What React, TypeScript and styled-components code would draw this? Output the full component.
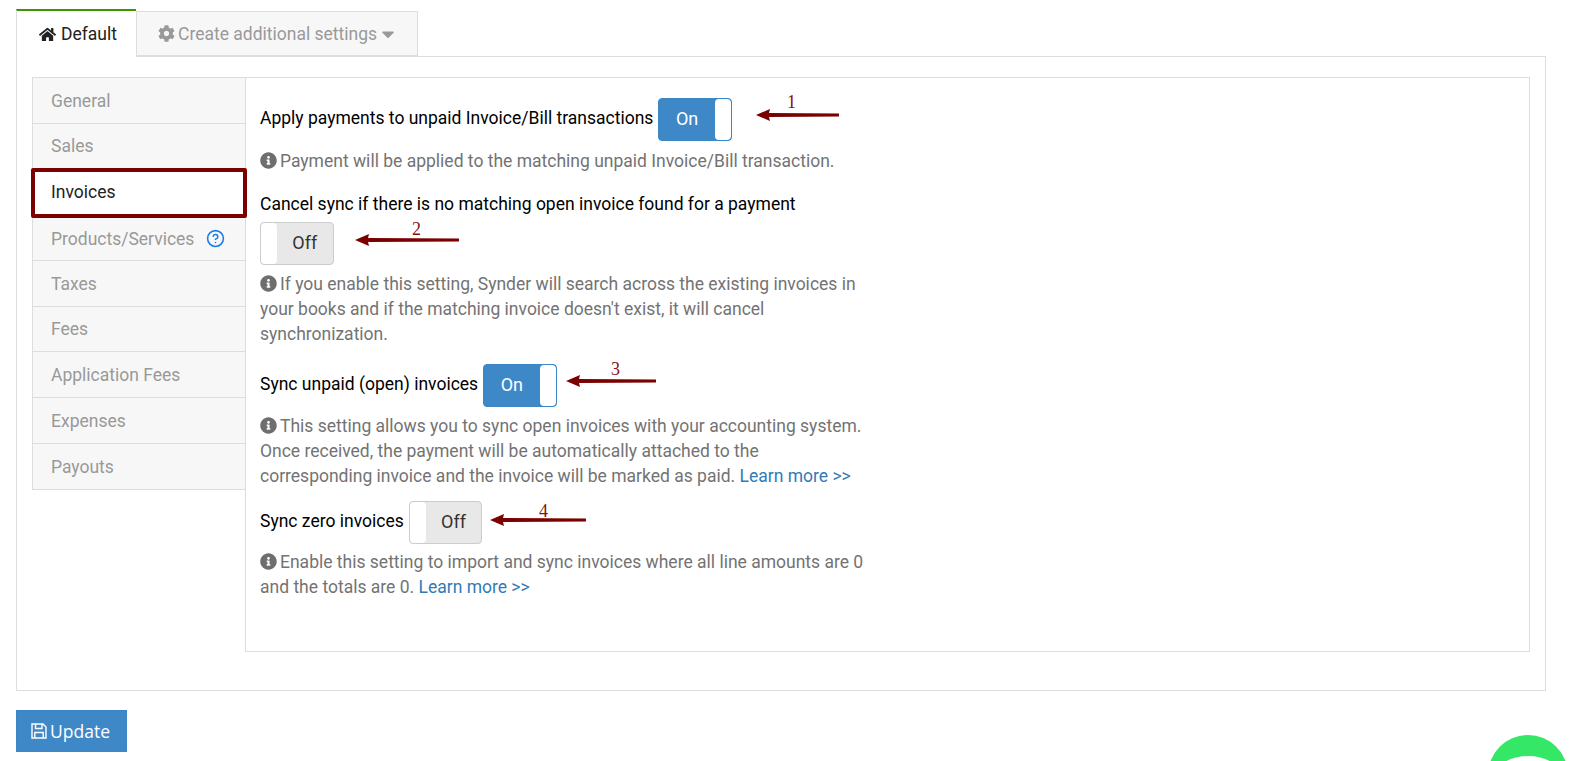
import styled, { createGlobalStyle } from 'styled-components';
import { FaHome, FaCog, FaCaretDown, FaInfoCircle } from 'react-icons/fa';
import { CircleHelp } from 'lucide-react';

const Global = createGlobalStyle`
    html, body {
        margin: 0;
        height: 761px;
        overflow: hidden;
        background: #fff;
        font-family: Roboto, "Liberation Sans", sans-serif;
        font-size: 17.5px;
        color: #000;
    }
    * { box-sizing: border-box; }
`

const Page = styled.div`
    position: relative;
    width: 1576px;
    height: 761px;
    overflow: hidden;
    padding: 9px 30px 0 16px;
`

const Tabs = styled.div`
    display: flex;
    align-items: flex-end;
    height: 47px;
    position: relative;
    z-index: 1;
`

const ActiveTab = styled.div`
    width: 120px;
    height: 48px;
    margin-bottom: -1px;
    border-top: 2px solid #3f9300;
    border-left: 1px solid #ddd;
    background: #fff;
    display: flex;
    align-items: center;
    padding-left: 22px;
    gap: 5px;
    color: #222;
    svg { font-size: 17px; }
`

const DisabledTab = styled.div`
    width: 282px;
    height: 46px;
    margin-bottom: -1px;
    border: 1px solid #ddd;
    border-bottom-width: 2px;
    background: #f7f7f7;
    color: #999;
    display: flex;
    align-items: center;
    padding-left: 21px;
    gap: 3px;
    svg { font-size: 17px; }
    svg:last-child { font-size: 20px; margin-left: -2px; }
`

const Panel = styled.div`
    height: 635px;
    border: 1px solid #ddd;
    padding: 20px 15px 0;
    display: flex;
    align-items: flex-start;
`

const Side = styled.div`
    width: 213px;
    border: 1px solid #ddd;
    border-right: none;
    background: #f7f7f7;
`

const SideItem = styled.div<{ $h: number }>`
    height: ${p => p.$h}px;
    display: flex;
    align-items: center;
    padding-left: 18px;
    color: #999;
    border-bottom: 1px solid #ddd;
    &:last-child { border-bottom: none; }
`

const SideActive = styled.div`
    height: 50px;
    margin: -1px 0 -1px -2px;
    width: 216px;
    position: relative;
    display: flex;
    align-items: center;
    padding: 0 0 3px 16px;
    background: #fff;
    color: #222;
    border: 4px solid #7b0000;
    border-radius: 2px;
`

const Help = styled.span`
    color: #1a7fe8;
    margin-left: 12px;
    display: flex;
`

const Content = styled.div`
    width: 1287px;
    height: 575px;
    border: 1px solid #ddd;
    padding: 20px 15px 0 14px;
`

const Setting = styled.div<{ $mb: number }>`
    margin-bottom: ${p => p.$mb}px;
`

const Label = styled.div`
    display: flex;
    align-items: center;
    gap: 5px;
    height: 43px;
`

const LabelText = styled.span`
    margin-bottom: 3px;
`

const TextLabel = styled.div`
    height: 26px;
    margin-bottom: 5px;
    line-height: 26px;
`

const Toggle = styled.div<{ $on: boolean }>`
    width: 73.5px;
    height: 43px;
    border-radius: 4px;
    display: flex;
    flex-direction: ${p => (p.$on ? 'row' : 'row-reverse')};
    overflow: hidden;
    border: 1px solid ${p => (p.$on ? '#3d86c6' : '#ccc')};
    background: ${p => (p.$on ? '#3f88c8' : '#e8e8e8')};
    color: ${p => (p.$on ? '#fff' : '#333')};
`

const ToggleText = styled.div`
    flex: 1;
    display: flex;
    align-items: center;
    justify-content: center;
    font-size: 18px;
    padding-bottom: 2px;
`

const Knob = styled.div`
    width: 16px;
    background: #fff;
    border-radius: 4px;
`

const Note = styled.p<{ $mt: number }>`
    margin: ${p => p.$mt}px 0 0;
    width: 610px;
    line-height: 25px;
    color: #737373;
    svg { font-size: 17px; color: #6e6e6e; vertical-align: -2px; margin-right: 3px; }
`

const More = styled.a`
    color: #337ab7;
`

const UpdateButton = styled.div`
    margin-top: 19px;
    width: 111px;
    height: 42px;
    background: #3f88c8;
    border: 1px solid #3d86c6;
    color: #fff;
    font-family: "Open Sans", sans-serif;
    font-size: 17.5px;
    display: flex;
    align-items: center;
    padding-left: 14px;
    gap: 3px;
`

const Bubble = styled.div`
    position: absolute;
    left: 1488px;
    top: 735px;
    width: 80px;
    height: 80px;
    border-radius: 50%;
    background: #34e766;
    display: flex;
    align-items: center;
    justify-content: center;
    &::after {
        content: '';
        width: 64px;
        height: 38px;
        border-radius: 50%;
        background: #fff;
    }
`

const Arrow = styled.svg<{ $x: number; $y: number }>`
    position: absolute;
    left: ${p => p.$x}px;
    top: ${p => p.$y}px;
    z-index: 2;
`

const Num = styled.span<{ $x: number; $y: number }>`
    position: absolute;
    left: ${p => p.$x}px;
    top: ${p => p.$y}px;
    font-family: "Liberation Serif", serif;
    font-size: 18px;
    line-height: 18px;
    color: #8a1010;
    z-index: 2;
`

const arrows = [
    { n: '1', x: 756, y: 115, w: 84, nx: 787, ny: 93 },
    { n: '2', x: 355, y: 240, w: 105, nx: 412, ny: 220 },
    { n: '3', x: 566, y: 381, w: 91, nx: 611, ny: 360 },
    { n: '4', x: 490, y: 520, w: 97, nx: 539, ny: 502 },
]

const SaveIcon = () => (
    <svg width="16" height="16" viewBox="0 0 16 16" fill="none" stroke="#fff" strokeWidth="1.4">
        <path d="M1 1h11l3 3v11H1z" />
        <path d="M4.5 1v4.5h6.5V1" />
        <path d="M3.8 15V9.5h8.4V15" />
    </svg>
)

const App = () => {
    return (
        <Page>
            <Global />
            <Tabs>
                <ActiveTab><FaHome />Default</ActiveTab>
                <DisabledTab><FaCog />Create additional settings <FaCaretDown /></DisabledTab>
            </Tabs>
            <Panel>
                <Side>
                    <SideItem $h={46}>General</SideItem>
                    <SideItem $h={45}>Sales</SideItem>
                    <SideActive>Invoices</SideActive>
                    <SideItem $h={44}>Products/Services<Help><CircleHelp size={19} /></Help></SideItem>
                    <SideItem $h={46}>Taxes</SideItem>
                    <SideItem $h={45}>Fees</SideItem>
                    <SideItem $h={46}>Application Fees</SideItem>
                    <SideItem $h={46}>Expenses</SideItem>
                    <SideItem $h={45}>Payouts</SideItem>
                </Side>
                <Content>
                    <Setting $mb={17}>
                        <Label><LabelText>Apply payments to unpaid Invoice/Bill transactions</LabelText><Toggle $on><ToggleText>On</ToggleText><Knob /></Toggle></Label>
                        <Note $mt={8}><FaInfoCircle />Payment will be applied to the matching unpaid Invoice/Bill transaction.</Note>
                    </Setting>
                    <Setting $mb={17}>
                        <TextLabel>Cancel sync if there is no matching open invoice found for a payment</TextLabel>
                        <Toggle $on={false}><ToggleText>Off</ToggleText><Knob /></Toggle>
                        <Note $mt={7}><FaInfoCircle />If you enable this setting, Synder will search across the existing invoices in your books and if the matching invoice doesn't exist, it will cancel synchronization.</Note>
                    </Setting>
                    <Setting $mb={12}>
                        <Label><LabelText>Sync unpaid (open) invoices</LabelText><Toggle $on><ToggleText>On</ToggleText><Knob /></Toggle></Label>
                        <Note $mt={7}><FaInfoCircle />This setting allows you to sync open invoices with your accounting system. Once received, the payment will be automatically attached to the corresponding invoice and the invoice will be marked as paid. <More>Learn more &gt;&gt;</More></Note>
                    </Setting>
                    <Setting $mb={0}>
                        <Label><LabelText>Sync zero invoices</LabelText><Toggle $on={false}><ToggleText>Off</ToggleText><Knob /></Toggle></Label>
                        <Note $mt={6}><FaInfoCircle />Enable this setting to import and sync invoices where all line amounts are 0 and the totals are 0. <More>Learn more &gt;&gt;</More></Note>
                    </Setting>
                </Content>
            </Panel>
            <UpdateButton><SaveIcon />Update</UpdateButton>
            {arrows.map(a => (
                <span key={a.n}>
                    <Arrow $x={a.x} $y={a.y - 7} width={a.w} height={14} viewBox={`0 0 ${a.w} 14`}>
                        <path d={`M0 7 L14 1 L13 5 L${a.w - 1} 5.5 L${a.w - 1} 8.5 L13 9 L14 13 Z`} fill="#7b0000" />
                    </Arrow>
                    <Num $x={a.nx} $y={a.ny}>{a.n}</Num>
                </span>
            ))}
            <Bubble />
        </Page>
    )
}

export default App
